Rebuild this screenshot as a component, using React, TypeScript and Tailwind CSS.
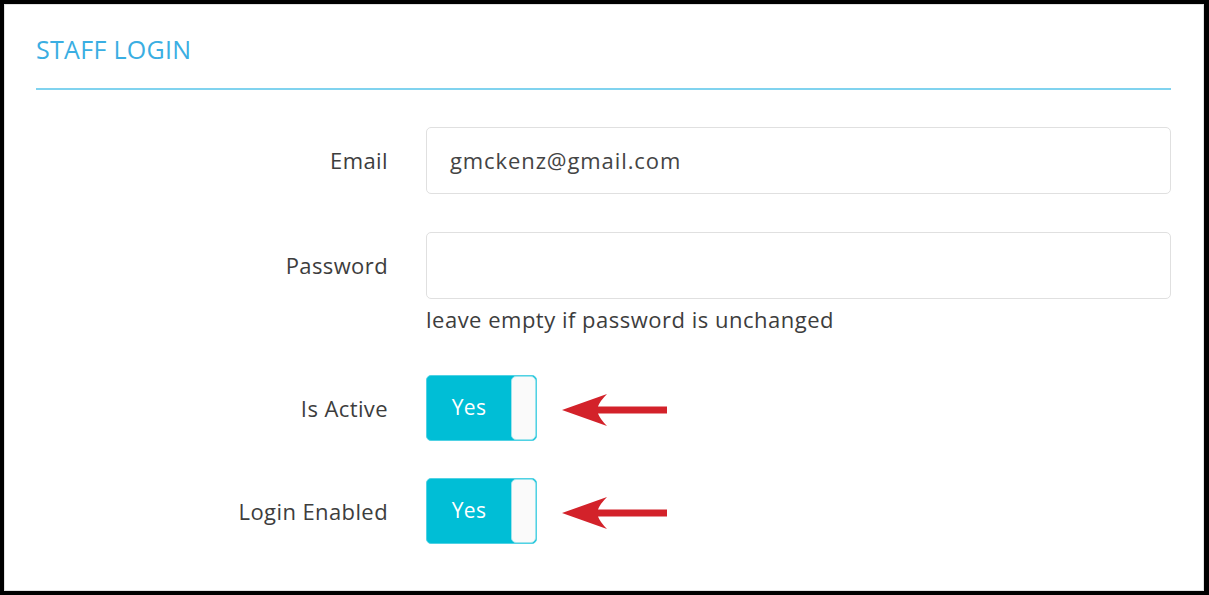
import React from "react";

const font = { fontFamily: '"Open Sans", "Noto Sans", sans-serif' };

const Arrow = () => (
  <svg width="105" height="32" viewBox="0 0 105 32" className="ml-[25px] mt-[3px]">
    <path
      d="M0 16 L45 0 Q38 7 36 12.5 L105 12.5 L105 19.5 L36 19.5 Q38 25 45 32 Z"
      fill="#d3222a"
    />
  </svg>
);

const Toggle = () => (
  <div className="flex h-[66px] w-[111px] overflow-hidden rounded-[5px] border border-[#4fd2e4] bg-[#00bed6]">
    <div className="flex flex-1 items-center justify-center text-[21px] tracking-[0.3px] text-white">Yes</div>
    <div className="w-[25px] rounded-[5px] border border-[#9ee3ec] bg-[#fafafa]" />
  </div>
);

interface RowProps {
  label: string;
  children: React.ReactNode;
}

const Row = ({ label, children }: RowProps) => (
  <div className="flex items-center gap-[38px]">
    <label className="w-[352px] text-right text-[22px] tracking-[0.4px] text-[#3d3d3d]">{label}</label>
    <div className="flex flex-1 items-center">{children}</div>
  </div>
);

export default function App() {
  return (
    <div
      className="h-[595px] w-[1209px] border-t-4 border-b-4 border-l-4 border-r-[5px] border-black"
      style={font}
    >
      <div className="h-full border border-[#e2e2e2] bg-white pl-[31px] pr-[32px] pt-[28px]">
        <h2 className="text-[25px] leading-[32px] tracking-[0.3px] text-[#3aaee2]">STAFF LOGIN</h2>
        <div className="mt-[23px] h-[2px] bg-[#80d3ef]" />

        <div className="mt-[37px] flex flex-col">
          <Row label="Email">
            <div className="flex h-[67px] flex-1 items-center rounded-[5px] border border-[#e0e0e0] px-[23px] text-[22px] tracking-[0.9px] text-[#444]">
              gmckenz@gmail.com
            </div>
          </Row>

          <div className="mt-[38px]">
            <Row label="Password">
              <div className="h-[67px] flex-1 rounded-[5px] border border-[#e0e0e0]" />
            </Row>
            <p className="ml-[390px] mt-[5px] text-[22px] leading-[30px] tracking-[0.5px] text-[#3d3d3d]">
              leave empty if password is unchanged
            </p>
          </div>

          <div className="mt-[41px]">
            <Row label="Is Active">
              <Toggle />
              <Arrow />
            </Row>
          </div>

          <div className="mt-[37px]">
            <Row label="Login Enabled">
              <Toggle />
              <Arrow />
            </Row>
          </div>
        </div>
      </div>
    </div>
  );
}
